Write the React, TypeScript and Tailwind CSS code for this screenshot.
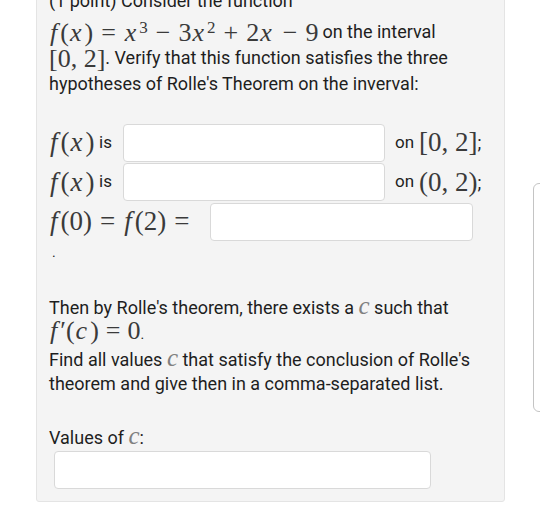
import React from "react";

const M = ({ children, className = "" }: { children: React.ReactNode; className?: string }) => (
  <span className={"font-['Liberation_Serif','DejaVu_Serif',serif] text-[#3a3a3a] whitespace-nowrap " + className}>{children}</span>
);
const I = ({ children }: { children: React.ReactNode }) => <i className="italic pl-[1px] pr-[3px]">{children}</i>;
const R = ({ children }: { children: React.ReactNode }) => <span className="mx-[7px]">{children}</span>;
const RW = ({ children }: { children: React.ReactNode }) => <span className="mx-[8px]">{children}</span>;
const B = ({ children }: { children: React.ReactNode }) => <span className="mx-[8px]">{children}</span>;

const Box = ({ className = "" }: { className?: string }) => (
  <div className={"h-[38px] shrink-0 rounded-[4px] border border-[#d9d9d9] bg-white " + className} />
);

export default function App() {
  return (
    <div className="relative h-[507px] w-[540px] overflow-hidden bg-white font-['Roboto','Liberation_Sans',sans-serif] text-[18px] text-[#1e1e1e]">
      <div className="ml-[36px] mt-[-14px] w-[469px] rounded-b-[3px] border border-[#e4e4e4] bg-[#f4f4f4] pb-[12px] pl-[12px]">
        <div className="h-[28px] leading-[28px]">(1 point) Consider the function</div>
        <div className="flex h-[30px] items-end leading-[26px]">
          <M className="text-[26px] leading-[24px]">
            <I>f</I>(<I>x</I>)<RW>=</RW><I>x</I>
            <sup className="text-[17px]">3</sup>
            <B>−</B>3<I>x</I>
            <sup className="text-[17px]">2</sup>
            <B>+</B>2<I>x</I>
            <B>−</B>9
          </M>
          <span className="ml-[4px]">on the interval</span>
        </div>
        <div className="flex h-[26px] items-end leading-[26px]">
          <M className="text-[26px] leading-[24px]">[0, 2]</M>
          <span>. Verify that this function satisfies the three</span>
        </div>
        <div className="h-[26px] leading-[26px]">hypotheses of Rolle's Theorem on the inverval:</div>

        <div className="mt-[26px] flex h-[39px] items-center">
          <M className="w-[50px] text-[27px]">
            <I>f</I>(<I>x</I>)
          </M>
          <span className="w-[24px] text-[17px]">is</span>
          <Box className="w-[262px]" />
          <span className="ml-[10px] text-[17px]">on</span>
          <M className="ml-[5px] text-[27px]">[0, 2]</M>
          <span>;</span>
        </div>
        <div className="flex h-[40px] items-center">
          <M className="w-[50px] text-[27px]">
            <I>f</I>(<I>x</I>)
          </M>
          <span className="w-[24px] text-[17px]">is</span>
          <Box className="w-[262px]" />
          <span className="ml-[10px] text-[17px]">on</span>
          <M className="ml-[5px] text-[27px]">(0, 2)</M>
          <span>;</span>
        </div>
        <div className="flex h-[39px] items-center">
          <M className="w-[161px] text-[27px]">
            <I>f</I>(0)<RW>=</RW><I>f</I>(2)<RW>=</RW>
          </M>
          <Box className="w-[263px]" />
        </div>
        <div className="ml-[3px] mt-[1px] h-[20px] text-[14px] leading-[20px]">.</div>

        <div className="mt-[31px] h-[26px] leading-[26px]">
          Then by Rolle's theorem, there exists a <M className="text-[25px] italic text-[#808080]">c</M> such that
        </div>
        <div className="h-[26px] leading-[26px]">
          <M className="text-[26px] leading-[24px]">
            <I>f</I>′(<I>c</I>)<R>=</R>0
          </M>
          <span className="text-[14px]">.</span>
        </div>
        <div className="h-[26px] leading-[26px]">
          Find all values <M className="text-[25px] italic text-[#808080]">c</M> that satisfy the conclusion of Rolle's
        </div>
        <div className="h-[26px] leading-[26px]">theorem and give then in a comma-separated list.</div>

        <div className="mt-[26px] h-[26px] leading-[26px]">
          Values of <M className="text-[25px] italic text-[#808080]">c</M>:
        </div>
        <Box className="ml-[5px] mt-[2px] w-[377px]" />
      </div>
      <div className="absolute left-[533px] top-[183px] h-[229px] w-[40px] rounded-[6px] border border-[#c4c4c4] bg-white" />
    </div>
  );
}
